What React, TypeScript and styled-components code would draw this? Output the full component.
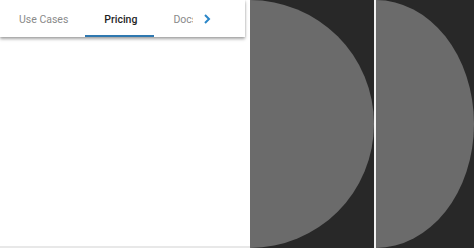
import React from "react";
import styled, { createGlobalStyle } from "styled-components";

const Global = createGlobalStyle`
  html, body { margin: 0; padding: 0; background: #ffffff; }
  body { font-family: Roboto, "Noto Sans", sans-serif; }
`;

const Page = styled.div`
  display: flex;
  width: 474px;
  height: 248px;
  overflow: hidden;
`;

const LeftPanel = styled.div`
  width: 250px;
  flex: none;
  background: #ffffff;
  display: flex;
  flex-direction: column;
  box-sizing: border-box;
  border-bottom: 2px solid #e8e8e8;
  padding-bottom: 3px;
`;

const TabBar = styled.div`
  width: 245px;
  height: 37px;
  display: flex;
  align-items: stretch;
  background: #ffffff;
  box-shadow: 0 2px 3px rgba(0, 0, 0, 0.35), 0 0 2px rgba(0, 0, 0, 0.12);
  position: relative;
  z-index: 1;
`;

const TabList = styled.div`
  display: flex;
  width: 193px;
  overflow: hidden;
  flex: none;
`;

const Tab = styled.div<{ $active?: boolean }>`
  flex: none;
  padding: 1px 17px 0 19px;
  display: flex;
  align-items: center;
  justify-content: center;
  font-size: 10.5px;
  font-weight: ${(p) => (p.$active ? 500 : 400)};
  color: ${(p) => (p.$active ? "#1f1f1f" : "#8a8a8a")};
  position: relative;
  white-space: nowrap;
  &::after {
    content: "";
    display: ${(p) => (p.$active ? "block" : "none")};
    position: absolute;
    left: 0;
    right: 0;
    bottom: 0;
    height: 2px;
    background: #2f78b0;
  }
`;

const Spacer = styled.div`
  flex: 1;
`;

const ScrollButton = styled.div`
  width: 28px;
  flex: none;
  display: flex;
  align-items: center;
  justify-content: center;
  padding-top: 1px;
  color: #2a86c8;
`;

const Body = styled.div`
  flex: 1;
`;

const Dark = styled.div`
  flex: 1;
  display: flex;
  background: #282828;
`;

const Slot = styled.div<{ $w: number }>`
  width: ${(p) => p.$w}px;
  flex: none;
  display: flex;
`;

const HalfDisc = styled.div`
  flex: 1;
  background: #6b6b6b;
  border-radius: 0 100% 100% 0 / 0 50% 50% 0;
`;

const Divider = styled.div`
  width: 2px;
  flex: none;
  background: #f2f2f2;
`;

export default function App() {
  return (
    <>
      <Global />
      <Page>
        <LeftPanel>
          <TabBar>
            <TabList>
              <Tab>Use Cases</Tab>
              <Tab $active>Pricing</Tab>
              <Tab>Docs</Tab>
            </TabList>
            <ScrollButton>
              <svg width="10" height="12" viewBox="0 0 10 12">
                <path d="M3 2 L7 6 L3 10" fill="none" stroke="currentColor" strokeWidth="2" />
              </svg>
            </ScrollButton>
            <Spacer />
          </TabBar>
          <Body />
        </LeftPanel>
        <Dark>
          <Slot $w={124}>
            <HalfDisc />
          </Slot>
          <Divider />
          <Slot $w={98}>
            <HalfDisc />
          </Slot>
        </Dark>
      </Page>
    </>
  );
}
